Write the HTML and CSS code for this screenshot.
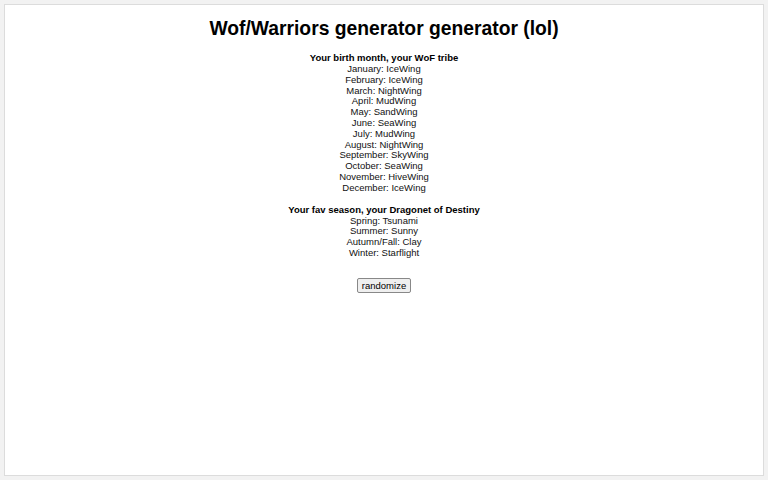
FILE: index.html
```html
<!DOCTYPE html>
<html lang="en">
<head>
  <meta charset="UTF-8">
  <title>Wof/Warriors generator generator (lol)</title>
  <link rel="stylesheet" href="styles.css">
</head>
<body>

  <div class="page">
    <h1>Wof/Warriors generator generator (lol)</h1>

    <div class="list">
      <h2>Your birth month, your WoF tribe</h2>
      <p>January: IceWing</p>
      <p>February: IceWing</p>
      <p>March: NightWing</p>
      <p>April: MudWing</p>
      <p>May: SandWing</p>
      <p>June: SeaWing</p>
      <p>July: MudWing</p>
      <p>August: NightWing</p>
      <p>September: SkyWing</p>
      <p>October: SeaWing</p>
      <p>November: HiveWing</p>
      <p>December: IceWing</p>
    </div>

    <div class="list">
      <h2>Your fav season, your Dragonet of Destiny</h2>
      <p>Spring: Tsunami</p>
      <p>Summer: Sunny</p>
      <p>Autumn/Fall: Clay</p>
      <p>Winter: Starflight</p>
    </div>

    <button type="button" id="randomize">randomize</button>
  </div>

</body>
</html>
```

FILE: styles.css
```css
html, body {
  height: 100%;
}
body {
  margin: 0;
  padding: 4px;
  box-sizing: border-box;
  background-color: #f2f2f2;
  font-family: "Liberation Sans", Arial, sans-serif;
  color: #000;
}
.page {
  height: 100%;
  box-sizing: border-box;
  background-color: #fff;
  border: 1px solid #dcdcdc;
  text-align: center;
  padding-top: 14px;
}
h1 {
  margin: 0 0 13px;
  font-size: 19.3px;
  line-height: 20px;
}
.list {
  margin-bottom: 10px;
}
h2 {
  margin: 0;
  font-size: 9.5px;
  line-height: 12px;
}
p {
  margin: 0;
  font-size: 9.5px;
  line-height: 10.8px;
  color: #111;
}
button {
  margin-top: 9px;
  font-family: "Liberation Sans", Arial, sans-serif;
  font-size: 9.5px;
  padding: 1px 4px;
  background-color: #efefef;
  border: 1px solid #888;
  border-radius: 2px;
}
```
